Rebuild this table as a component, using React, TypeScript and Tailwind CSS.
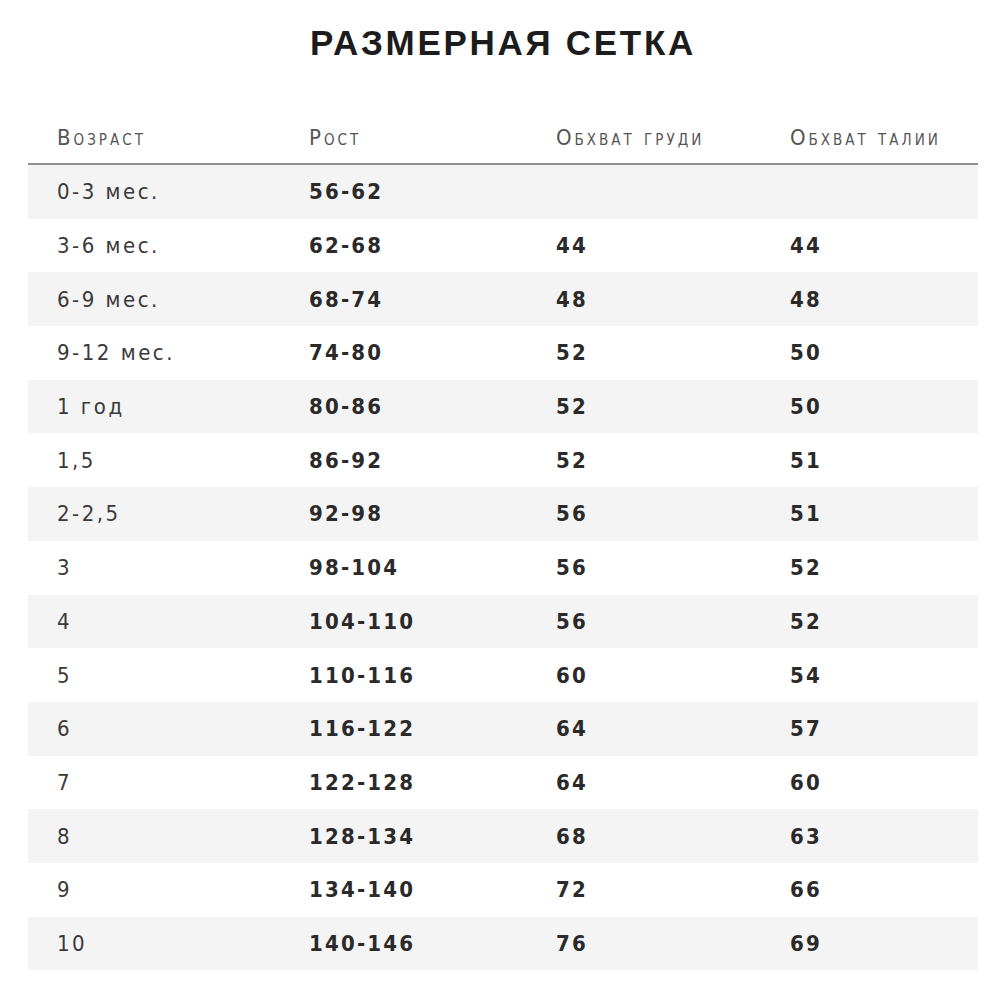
import React from "react";

const rows: [string, string, string, string][] = [
  ["0-3 мес.", "56-62", "", ""],
  ["3-6 мес.", "62-68", "44", "44"],
  ["6-9 мес.", "68-74", "48", "48"],
  ["9-12 мес.", "74-80", "52", "50"],
  ["1 год", "80-86", "52", "50"],
  ["1,5", "86-92", "52", "51"],
  ["2-2,5", "92-98", "56", "51"],
  ["3", "98-104", "56", "52"],
  ["4", "104-110", "56", "52"],
  ["5", "110-116", "60", "54"],
  ["6", "116-122", "64", "57"],
  ["7", "122-128", "64", "60"],
  ["8", "128-134", "68", "63"],
  ["9", "134-140", "72", "66"],
  ["10", "140-146", "76", "69"],
];

export default function App() {
  return (
    <div className="w-[1000px] h-[990px] bg-white overflow-hidden">
      <h1 className="pt-[19px] pl-[6px] text-center text-[35px] leading-[48px] font-bold tracking-[2.7px] text-[#1c1c1c] [font-family:'Liberation_Sans',Arial,sans-serif]">
        РАЗМЕРНАЯ СЕТКА
      </h1>
      <div className="ml-[28px] w-[950px]">
        <div className="grid grid-cols-[252px_247px_234px_217px] pt-[55px] pb-[9px] border-b-2 border-[#8f8f8f] text-[22px] leading-[32px] text-[#555] [font-variant:small-caps] [font-family:'DejaVu_Sans_Condensed','DejaVu_Sans',sans-serif] tracking-[3px]">
          <div className="pl-[29px]">Возраст</div>
          <div className="pl-[29px]">Рост</div>
          <div className="pl-[29px]">Обхват груди</div>
          <div className="pl-[29px]">Обхват талии</div>
        </div>
        {rows.map((r, i) => (
          <div
            key={i}
            className={`grid grid-cols-[252px_247px_234px_217px] h-[53.7px] items-center text-[22px] [font-family:'DejaVu_Sans_Condensed','DejaVu_Sans',sans-serif] ${
              i % 2 === 0 ? "bg-[#f4f4f4]" : "bg-white"
            }`}
          >
            <div className="pl-[29px] text-[#3a3a3a] tracking-[2.5px]">{r[0]}</div>
            <div className="pl-[29px] font-bold text-[#2a2a2a] tracking-[2.2px]">{r[1]}</div>
            <div className="pl-[29px] font-bold text-[#2a2a2a] tracking-[2.2px]">{r[2]}</div>
            <div className="pl-[29px] font-bold text-[#2a2a2a] tracking-[2.2px]">{r[3]}</div>
          </div>
        ))}
      </div>
    </div>
  );
}
